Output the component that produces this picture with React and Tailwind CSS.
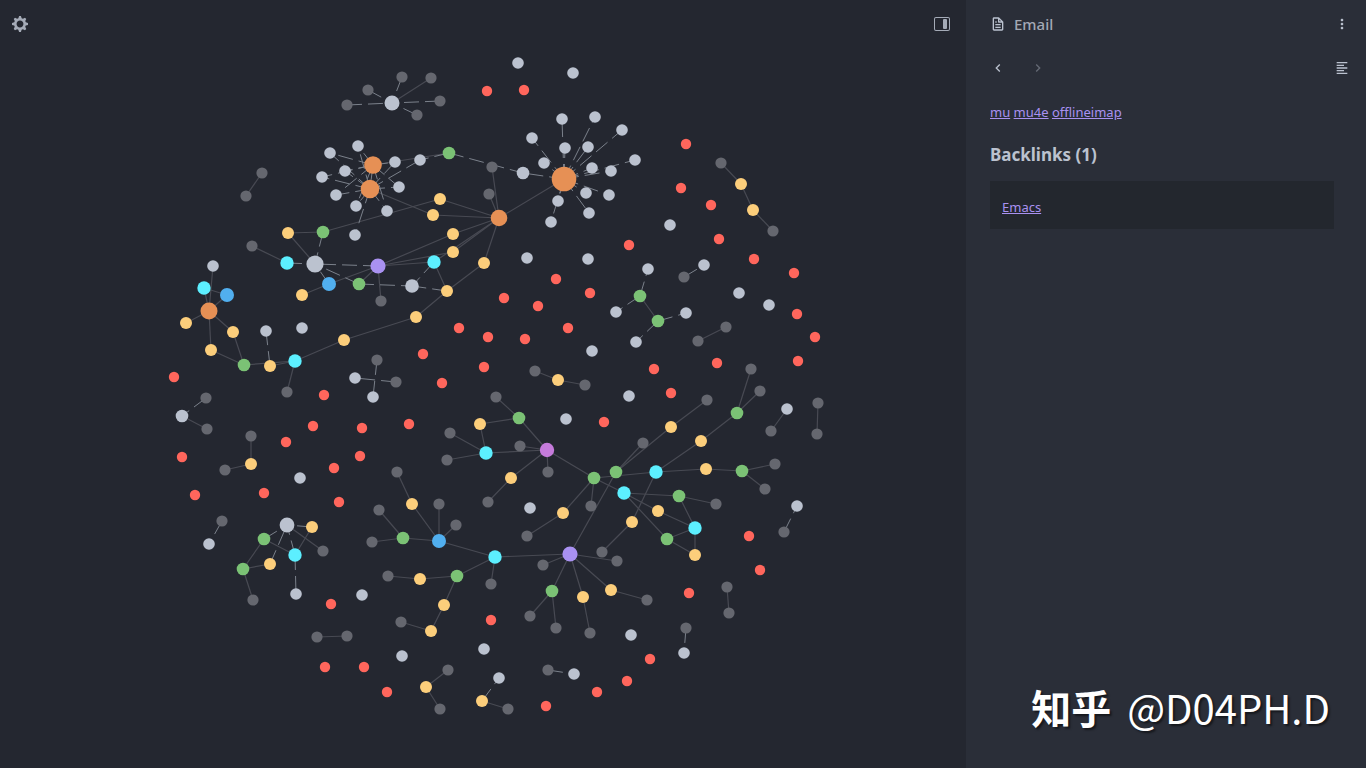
import React, { useState } from 'react';
import { BiAlignLeft, BiDotsVerticalRounded, BiFile } from 'react-icons/bi';
import { BsReverseLayoutSidebarInsetReverse } from 'react-icons/bs';

// [x, y, radius] per colour
const NODE_GROUPS = [
  {
    fill: '#65676f',
    radius: 5.6,
    nodes: [
      [402, 77], [431, 78], [368, 90], [347, 105], [440, 101], [417, 115], [262, 173], [246, 196],
      [252, 246], [492, 167], [489, 194], [381, 301], [287, 392], [377, 360], [396, 382], [206, 398],
      [207, 429], [251, 436], [225, 470], [222, 521], [323, 551], [253, 600], [721, 163], [773, 231],
      [684, 277], [726, 327], [698, 341], [535, 371], [585, 385], [496, 397], [450, 433], [447, 460],
      [520, 446], [548, 472], [488, 502], [527, 536], [591, 506], [643, 443], [707, 400], [751, 369],
      [760, 391], [818, 403], [817, 434], [771, 431], [775, 464], [765, 489], [716, 504], [784, 532],
      [397, 472], [439, 504], [456, 525], [379, 510], [372, 542], [388, 576], [491, 584], [401, 622],
      [317, 637], [347, 636], [448, 670], [440, 709], [508, 709], [548, 670], [530, 616], [556, 628],
      [590, 633], [647, 600], [543, 565], [602, 552], [617, 561], [727, 587], [729, 613], [686, 628],
    ],
  },
  {
    fill: '#bbc2cf',
    radius: 5.8,
    nodes: [
      [518, 63], [573, 73], [392, 103, 7.5], [330, 153], [358, 146], [395, 162], [420, 160], [345, 171],
      [322, 177], [399, 187], [336, 195], [356, 206], [387, 211], [355, 235], [562, 119], [595, 117],
      [622, 130], [532, 138], [565, 148], [588, 147], [635, 160], [544, 163], [592, 168], [611, 171],
      [523, 173, 6.3], [586, 193], [609, 195], [558, 201], [589, 213], [551, 222], [670, 225],
      [527, 258], [588, 259], [648, 269], [704, 265], [739, 293], [769, 305], [616, 312], [686, 313],
      [636, 342], [592, 351], [412, 286, 6.8], [315, 264, 8.6], [213, 266], [302, 328], [266, 331],
      [355, 378], [373, 397], [629, 396], [566, 419], [787, 409], [182, 416, 6.3], [300, 478],
      [530, 508], [797, 506], [287, 525, 7.4], [209, 544], [296, 594], [362, 595], [402, 656],
      [484, 649], [499, 678], [574, 674], [631, 635], [684, 653],
    ],
  },
  {
    fill: '#ff665c',
    radius: 5.2,
    nodes: [
      [487, 91], [524, 90], [686, 144], [681, 188], [711, 205], [719, 239], [629, 245], [754, 259],
      [794, 273], [797, 314], [815, 337], [798, 361], [556, 279], [590, 293], [504, 298], [538, 306],
      [568, 328], [525, 339], [459, 328], [488, 337], [484, 367], [423, 354], [442, 383], [654, 369],
      [671, 393], [717, 363], [604, 422], [174, 377], [324, 395], [313, 426], [362, 428], [409, 424],
      [286, 442], [360, 456], [334, 468], [182, 457], [195, 495], [264, 493], [339, 502], [331, 604],
      [325, 667], [364, 667], [387, 692], [491, 620], [546, 706], [597, 692], [627, 681], [650, 659],
      [689, 593], [749, 536], [760, 570],
    ],
  },
  {
    fill: '#fcce7b',
    radius: 6,
    nodes: [
      [288, 233], [440, 199], [433, 215], [453, 234], [453, 252], [484, 263], [447, 291], [416, 317],
      [344, 340], [302, 295], [186, 323], [233, 332], [211, 350], [270, 366], [741, 184], [753, 210],
      [558, 380], [480, 424], [511, 478], [563, 513], [671, 427], [701, 441], [706, 469], [658, 511],
      [632, 522], [695, 555], [251, 464], [312, 527], [270, 564], [412, 504], [420, 579], [444, 605],
      [431, 631], [426, 687], [482, 701], [583, 597], [611, 590],
    ],
  },
  {
    fill: '#7bc275',
    radius: 6.3,
    nodes: [
      [449, 153], [323, 232], [359, 284], [244, 365], [640, 296], [658, 321], [519, 418], [594, 478],
      [616, 472], [737, 413], [742, 471], [679, 496], [667, 539], [264, 539], [243, 569], [403, 538],
      [457, 576], [552, 591],
    ],
  },
  {
    fill: '#5cefff',
    radius: 6.7,
    nodes: [
      [287, 263], [434, 262], [204, 288], [295, 361], [486, 453], [656, 472], [624, 493], [695, 528],
      [295, 555], [495, 557],
    ],
  },
  { fill: '#51afef', radius: 7, nodes: [[329, 284], [227, 295], [439, 541]] },
  { fill: '#a991f1', radius: 7.6, nodes: [[378, 266], [570, 554]] },
  { fill: '#c57bdb', radius: 7.2, nodes: [[547, 450]] },
  {
    fill: '#e69055',
    radius: 8.5,
    nodes: [[373, 165, 8.8], [370, 189, 9.3], [564, 179, 12.3], [499, 218, 8.3], [209, 311, 8.5]],
  },
];

// [x1, y1, x2, y2]
const LINKS = [
  [262, 173, 246, 196], [392, 103, 431, 78], [288, 233, 323, 232], [288, 233, 315, 264],
  [323, 232, 440, 199], [252, 246, 287, 263], [440, 199, 499, 218], [433, 215, 499, 218],
  [370, 189, 433, 215], [378, 266, 453, 234], [453, 234, 499, 218], [378, 266, 453, 252],
  [453, 252, 499, 218], [378, 266, 434, 262], [434, 262, 499, 218], [499, 218, 484, 263],
  [499, 218, 492, 167], [499, 218, 489, 194], [499, 218, 564, 179], [373, 165, 449, 153],
  [378, 266, 329, 284], [378, 266, 359, 284], [378, 266, 381, 301], [329, 284, 302, 295],
  [434, 262, 447, 291], [484, 263, 447, 291], [447, 291, 416, 317], [416, 317, 344, 340],
  [344, 340, 295, 361], [295, 361, 287, 392], [295, 361, 270, 366], [295, 361, 244, 365],
  [244, 365, 233, 332], [244, 365, 211, 350], [211, 350, 209, 311], [233, 332, 209, 311],
  [209, 311, 186, 323], [209, 311, 204, 288], [209, 311, 227, 295], [209, 311, 213, 266],
  [204, 288, 227, 295], [182, 416, 207, 429], [251, 436, 251, 464], [251, 464, 225, 470],
  [721, 163, 741, 184], [741, 184, 753, 210], [753, 210, 773, 231], [640, 296, 658, 321],
  [726, 327, 698, 341], [535, 371, 558, 380], [558, 380, 585, 385], [496, 397, 519, 418],
  [519, 418, 480, 424], [519, 418, 547, 450], [480, 424, 486, 453], [486, 453, 450, 433],
  [486, 453, 447, 460], [486, 453, 547, 450], [520, 446, 547, 450], [547, 450, 548, 472],
  [547, 450, 511, 478], [511, 478, 488, 502], [547, 450, 594, 478], [594, 478, 563, 513],
  [563, 513, 527, 536], [594, 478, 591, 506], [594, 478, 624, 493], [594, 478, 656, 472],
  [616, 472, 643, 443], [616, 472, 671, 427], [671, 427, 707, 400], [616, 472, 570, 554],
  [656, 472, 701, 441], [701, 441, 737, 413], [737, 413, 751, 369], [737, 413, 760, 391],
  [656, 472, 706, 469], [706, 469, 742, 471], [742, 471, 775, 464], [742, 471, 765, 489],
  [656, 472, 632, 522], [632, 522, 602, 552], [624, 493, 679, 496], [679, 496, 716, 504],
  [679, 496, 695, 528], [624, 493, 658, 511], [658, 511, 695, 528], [624, 493, 667, 539],
  [667, 539, 695, 528], [667, 539, 695, 555], [695, 528, 695, 555], [787, 409, 771, 431],
  [818, 403, 817, 434], [287, 525, 323, 551], [264, 539, 295, 555], [264, 539, 243, 569],
  [243, 569, 270, 564], [243, 569, 253, 600], [312, 527, 295, 555], [397, 472, 412, 504],
  [412, 504, 439, 541], [439, 504, 439, 541], [456, 525, 439, 541], [379, 510, 403, 538],
  [372, 542, 403, 538], [403, 538, 439, 541], [439, 541, 495, 557], [495, 557, 570, 554],
  [495, 557, 491, 584], [495, 557, 457, 576], [457, 576, 420, 579], [420, 579, 388, 576],
  [457, 576, 444, 605], [444, 605, 431, 631], [431, 631, 401, 622], [317, 637, 347, 636],
  [426, 687, 448, 670], [426, 687, 440, 709], [482, 701, 508, 709], [570, 554, 543, 565],
  [570, 554, 617, 561], [570, 554, 552, 591], [570, 554, 583, 597], [570, 554, 611, 590],
  [552, 591, 530, 616], [552, 591, 556, 628], [583, 597, 590, 633], [611, 590, 647, 600],
  [727, 587, 729, 613],
];

// Citation links, drawn dashed
const DASHED_LINKS = [
  [402, 77, 392, 103], [368, 90, 392, 103], [347, 105, 392, 103], [440, 101, 392, 103],
  [417, 115, 392, 103], [373, 165, 330, 153], [370, 189, 330, 153], [373, 165, 358, 146],
  [370, 189, 358, 146], [373, 165, 395, 162], [370, 189, 395, 162], [370, 189, 420, 160],
  [373, 165, 345, 171], [370, 189, 345, 171], [373, 165, 322, 177], [370, 189, 322, 177],
  [373, 165, 399, 187], [370, 189, 399, 187], [373, 165, 336, 195], [370, 189, 336, 195],
  [373, 165, 356, 206], [370, 189, 356, 206], [373, 165, 387, 211], [370, 189, 387, 211],
  [370, 189, 355, 235], [373, 165, 370, 189], [449, 153, 420, 160], [449, 153, 523, 173],
  [564, 179, 562, 119], [564, 179, 595, 117], [564, 179, 622, 130], [564, 179, 532, 138],
  [564, 179, 565, 148], [564, 179, 588, 147], [564, 179, 635, 160], [564, 179, 544, 163],
  [564, 179, 592, 168], [564, 179, 611, 171], [564, 179, 523, 173], [564, 179, 586, 193],
  [564, 179, 609, 195], [564, 179, 558, 201], [564, 179, 589, 213], [564, 179, 551, 222],
  [323, 232, 315, 264], [287, 263, 315, 264], [378, 266, 315, 264], [329, 284, 315, 264],
  [359, 284, 315, 264], [359, 284, 412, 286], [434, 262, 412, 286], [447, 291, 412, 286],
  [270, 366, 266, 331], [377, 360, 373, 397], [396, 382, 355, 378], [206, 398, 182, 416],
  [640, 296, 648, 269], [640, 296, 616, 312], [658, 321, 686, 313], [658, 321, 636, 342],
  [684, 277, 704, 265], [784, 532, 797, 506], [222, 521, 209, 544], [264, 539, 287, 525],
  [312, 527, 287, 525], [295, 555, 287, 525], [270, 564, 287, 525], [295, 555, 296, 594],
  [482, 701, 499, 678], [548, 670, 574, 674], [686, 628, 684, 653],
];

function SettingsIcon() {
  return (
    <svg viewBox="0 0 14 14" className="size-4" fill="currentColor" aria-hidden="true">
      <path
        fillRule="evenodd"
        d="M14,7.77 L14,6.17 L12.06,5.53 L11.61,4.44 L12.49,2.6 L11.36,1.47 L9.55,2.38 L8.46,1.93 L7.81,0 L6.21,0 L5.57,1.94 L4.48,2.39 L2.64,1.51 L1.51,2.64 L2.42,4.45 L1.97,5.54 L0,6.17 L0,7.77 L1.94,8.41 L2.39,9.5 L1.51,11.34 L2.64,12.47 L4.45,11.56 L5.54,12.01 L6.19,13.94 L7.79,13.94 L8.43,12 L9.52,11.55 L11.36,12.43 L12.49,11.3 L11.58,9.49 L12.03,8.4 L14,7.77 Z M7,10 C5.34,10 4,8.66 4,7 C4,5.34 5.34,4 7,4 C8.66,4 10,5.34 10,7 C10,8.66 8.66,10 7,10 Z"
      />
    </svg>
  );
}

function Chevron({ direction }) {
  return (
    <svg viewBox="0 0 24 24" className="size-4" fill="currentColor" aria-hidden="true">
      {direction === 'left' ? (
        <path d="M15.41 7.41L14 6l-6 6 6 6 1.41-1.41L10.83 12z" />
      ) : (
        <path d="M10 6L8.59 7.41 13.17 12l-4.58 4.59L10 18l6-6z" />
      )}
    </svg>
  );
}

function IconButton({ label, className = '', children, ...props }) {
  return (
    <button
      type="button"
      aria-label={label}
      className={`flex size-10 items-center justify-center rounded-md ${className}`}
      {...props}
    >
      {children}
    </button>
  );
}

function Graph() {
  return (
    <svg viewBox="0 0 966 768" className="h-full w-full" role="img">
      <g stroke="#484a53" strokeWidth="1.2">
        {LINKS.map(([x1, y1, x2, y2], i) => (
          <line key={i} x1={x1} y1={y1} x2={x2} y2={y2} />
        ))}
      </g>
      <g stroke="#7b818b" strokeWidth="1" strokeDasharray="15 6">
        {DASHED_LINKS.map(([x1, y1, x2, y2], i) => (
          <line key={i} x1={x1} y1={y1} x2={x2} y2={y2} />
        ))}
      </g>
      {NODE_GROUPS.map(({ fill, radius, nodes }) => (
        <g key={fill} fill={fill}>
          {nodes.map(([cx, cy, r = radius]) => (
            <circle key={`${cx}-${cy}`} cx={cx} cy={cy} r={r} />
          ))}
        </g>
      ))}
    </svg>
  );
}

function NoteLink({ children }) {
  return (
    <a href="#" className="text-[#a991f1] underline">
      {children}
    </a>
  );
}

function Sidebar() {
  return (
    <aside className="flex w-[400px] shrink-0 flex-col bg-[#2a2e38] text-[#bbc2cf]">
      <header className="flex h-12 items-center pr-1 pl-6">
        <BiFile className="size-4" />
        <h1 className="ml-2 flex-1 text-[15px] font-medium text-[#a3a9b5]">Email</h1>
        <IconButton label="Options">
          <BiDotsVerticalRounded className="size-4" />
        </IconButton>
      </header>

      <nav className="flex h-10 items-center pr-1 pl-3">
        <IconButton label="Go backward">
          <Chevron direction="left" />
        </IconButton>
        <IconButton label="Go forward" className="opacity-40" disabled>
          <Chevron direction="right" />
        </IconButton>
        <IconButton label="Justify content" className="ml-auto">
          <BiAlignLeft className="size-4" />
        </IconButton>
      </nav>

      <div className="pt-3 pr-8 pl-6 text-[13px] leading-6">
        <p>
          <NoteLink>mu</NoteLink> <NoteLink>mu4e</NoteLink> <NoteLink>offlineimap</NoteLink>
        </p>
        <h2 className="mt-[19px] text-[17px] leading-6 font-bold">Backlinks (1)</h2>
        <div className="mt-[14px] bg-[#23272e] px-3 pt-[14px] pb-[10px]">
          <NoteLink>Emacs</NoteLink>
        </div>
      </div>
    </aside>
  );
}

function App() {
  const [isOpen, setIsOpen] = useState(true);

  return (
    <div className="relative flex h-screen overflow-hidden bg-[#242730] font-['Noto_Sans','Noto_Sans_CJK_SC',sans-serif]">
      <main className="relative min-w-0 flex-1">
        <Graph />
        <div className="absolute inset-x-0 top-0 flex h-12 items-center justify-between pr-1 text-[#a5abb7]">
          <IconButton label="Settings">
            <SettingsIcon />
          </IconButton>
          <IconButton label="Toggle sidebar" onClick={() => setIsOpen(!isOpen)}>
            <BsReverseLayoutSidebarInsetReverse className="size-4" />
          </IconButton>
        </div>
      </main>

      {isOpen && <Sidebar />}

      <div className="pointer-events-none absolute right-9 bottom-8 flex items-center gap-4 font-['Noto_Sans_CJK_SC',sans-serif] text-[40px] leading-[58px] text-white [text-shadow:2px_2px_2px_rgba(0,0,0,0.5)]">
        <span className="font-bold">知乎</span>
        <span>@D04PH.D</span>
      </div>
    </div>
  );
}

export default App;
